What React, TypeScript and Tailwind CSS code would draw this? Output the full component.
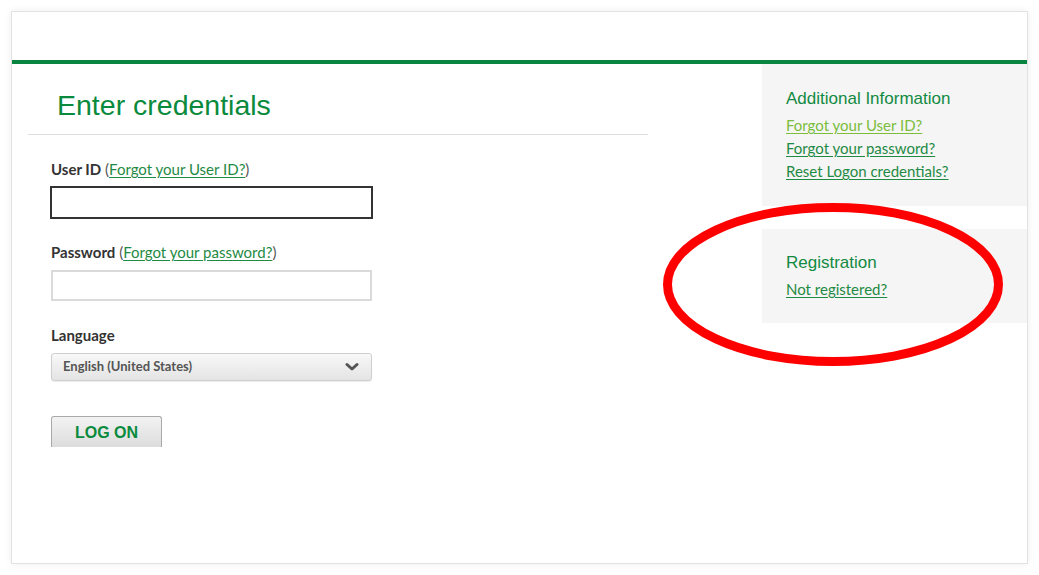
import { useState } from 'react';

const sans = { fontFamily: 'Lato, "Open Sans", sans-serif' };
const arial = { fontFamily: '"Liberation Sans", Arial, sans-serif' };

function Chevron() {
    return (
        <svg width="14" height="10" viewBox="0 0 14 10" className="text-[#555]">
            <path d="M2 2.5 L7 7 L12 2.5" fill="none" stroke="currentColor" strokeWidth="3" strokeLinecap="round" strokeLinejoin="round" />
        </svg>
    );
}

export default function App() {
    const [userId, setUserId] = useState('');
    const [password, setPassword] = useState('');

    return (
        <div className="relative w-[1039px] h-[575px] bg-white overflow-hidden">
            <div className="ml-[11px] mt-[11px] w-[1017px] h-[553px] border border-[#e2e2e2] bg-white shadow-[0_0_8px_rgba(0,0,0,0.07)] flex flex-col">
                <div className="h-[48px]" />
                <div className="h-[4px] bg-[#0a8540]" />

                <div className="flex flex-1">
                    {/* left: logon form */}
                    <div className="flex-1">
                        <h1 className="mt-[25px] ml-[45px] text-[28.5px] leading-[33px] text-[#0a8a3c]" style={arial}>Enter credentials</h1>
                        <div className="mt-[12px] ml-[16px] w-[620px] h-px bg-[#dedede]" />

                        <form className="ml-[38px] w-[323px]" style={sans} onSubmit={(e) => e.preventDefault()}>
                            <p className="mt-[24px] ml-px text-[15px] leading-[20px] text-[#555]">
                                <span className="font-bold text-[#333]">User ID</span> (<a href="#" className="text-[#1f8a44] underline underline-offset-2">Forgot your User ID?</a>)
                            </p>
                            <input
                                value={userId}
                                onChange={(e) => setUserId(e.target.value)}
                                className="mt-[7px] block w-[323px] h-[33px] border-2 border-[#333] bg-white outline-none"
                            />

                            <p className="mt-[23px] ml-px text-[15px] leading-[20px] text-[#555]">
                                <span className="font-bold text-[#333]">Password</span> (<a href="#" className="text-[#1f8a44] underline underline-offset-2">Forgot your password?</a>)
                            </p>
                            <input
                                type="password"
                                value={password}
                                onChange={(e) => setPassword(e.target.value)}
                                className="mt-[8px] ml-px block w-[321px] h-[31px] border-2 border-[#dadada] bg-white outline-none"
                            />

                            <p className="mt-[24px] ml-px text-[15px] leading-[20px] font-bold text-[#333]">Language</p>
                            <div className="mt-[8px] ml-px w-[321px] h-[28px] flex items-center justify-between pl-[11px] pr-[12px] rounded-[3px] border border-[#cfcfcf] bg-gradient-to-b from-[#f8f8f8] to-[#e4e4e4] shadow-[0_1px_1px_rgba(0,0,0,0.08)]">
                                <span className="text-[13px] font-bold text-[#555]">English (United States)</span>
                                <Chevron />
                            </div>

                            <button
                                type="submit"
                                className="mt-[35px] ml-px w-[111px] h-[31px] rounded-t-[3px] border border-b-0 border-[#a9a9a9] bg-gradient-to-b from-[#f3f3f3] to-[#dcdcdc] text-[16px] font-bold text-[#0a8a3c] pt-[2px]"
                                style={arial}
                            >
                                LOG ON
                            </button>
                        </form>
                    </div>

                    {/* right: side info */}
                    <div className="w-[265px] flex flex-col gap-[23px]">
                        <div className="h-[142px] bg-[#f5f5f5] pl-[24px] pt-[25px]">
                            <h2 className="text-[17px] leading-[20px] text-[#128a42]" style={arial}>Additional Information</h2>
                            <div className="mt-[5px] flex flex-col text-[15px] leading-[23px]" style={sans}>
                                <a href="#" className="text-[#7cbd3c] underline underline-offset-2">Forgot your User ID?</a>
                                <a href="#" className="text-[#1f8a44] underline underline-offset-2">Forgot your password?</a>
                                <a href="#" className="text-[#1f8a44] underline underline-offset-2">Reset Logon credentials?</a>
                            </div>
                        </div>
                        <div className="h-[94px] bg-[#f5f5f5] pl-[24px] pt-[24px]">
                            <h2 className="text-[17px] leading-[20px] text-[#128a42]" style={arial}>Registration</h2>
                            <div className="mt-[5px] text-[15px] leading-[23px]" style={sans}>
                                <a href="#" className="text-[#1f8a44] underline underline-offset-2">Not registered?</a>
                            </div>
                        </div>
                    </div>
                </div>
            </div>

            {/* red annotation ring */}
            <svg className="absolute left-[660px] top-[200px] pointer-events-none" width="346" height="170" viewBox="0 0 346 170">
                <ellipse cx="173" cy="84.5" rx="165.5" ry="77" fill="none" stroke="#ff0000" strokeWidth="9" />
            </svg>
        </div>
    );
}
